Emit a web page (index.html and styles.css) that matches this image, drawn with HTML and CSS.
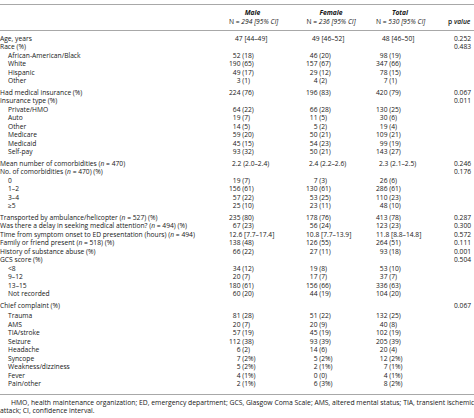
FILE: index.html
```html
<!DOCTYPE html>
<html>
<head>
<meta charset="utf-8">
<link rel="stylesheet" href="styles.css">
</head>
<body>
<div class="sheet">
  <div class="head">
    <div class="hrow">
      <div></div>
      <div class="hc m"><i class="hb">Male</i></div>
      <div class="hc f"><i class="hb">Female</i></div>
      <div class="hc t"><i class="hb">Total</i></div>
      <div></div>
    </div>
    <div class="hrow">
      <div></div>
      <div class="hc m">N = <i>294 [95% CI]</i></div>
      <div class="hc f">N = <i>236 [95% CI]</i></div>
      <div class="hc t">N = <i>530 [95% CI]</i></div>
      <div class="pc">p <i>value</i></div>
    </div>
  </div>

  <div class="body">
    <div class="group">
      <div class="row"><div>Age, years</div><div class="c ci">47 [44–49]</div><div class="c ci">49 [46–52]</div><div class="c ci">48 [46–50]</div><div class="p">0.252</div></div>
      <div class="row"><div>Race (%)</div><div></div><div></div><div></div><div class="p">0.483</div></div>
      <div class="row"><div class="sub">African-American/Black</div><div class="c"><span class="n">52</span> (18)</div><div class="c"><span class="n">46</span> (20)</div><div class="c"><span class="n">98</span> (19)</div><div></div></div>
      <div class="row"><div class="sub">White</div><div class="c"><span class="n">190</span> (65)</div><div class="c"><span class="n">157</span> (67)</div><div class="c"><span class="n">347</span> (66)</div><div></div></div>
      <div class="row"><div class="sub">Hispanic</div><div class="c"><span class="n">49</span> (17)</div><div class="c"><span class="n">29</span> (12)</div><div class="c"><span class="n">78</span> (15)</div><div></div></div>
      <div class="row"><div class="sub">Other</div><div class="c"><span class="n">3</span> (1)</div><div class="c"><span class="n">4</span> (2)</div><div class="c"><span class="n">7</span> (1)</div><div></div></div>
    </div>

    <div class="group">
      <div class="row"><div>Had medical insurance (%)</div><div class="c"><span class="n">224</span> (76)</div><div class="c"><span class="n">196</span> (83)</div><div class="c"><span class="n">420</span> (79)</div><div class="p">0.067</div></div>
      <div class="row"><div>Insurance type (%)</div><div></div><div></div><div></div><div class="p">0.011</div></div>
      <div class="row"><div class="sub">Private/HMO</div><div class="c"><span class="n">64</span> (22)</div><div class="c"><span class="n">66</span> (28)</div><div class="c"><span class="n">130</span> (25)</div><div></div></div>
      <div class="row"><div class="sub">Auto</div><div class="c"><span class="n">19</span> (7)</div><div class="c"><span class="n">11</span> (5)</div><div class="c"><span class="n">30</span> (6)</div><div></div></div>
      <div class="row"><div class="sub">Other</div><div class="c"><span class="n">14</span> (5)</div><div class="c"><span class="n">5</span> (2)</div><div class="c"><span class="n">19</span> (4)</div><div></div></div>
      <div class="row"><div class="sub">Medicare</div><div class="c"><span class="n">59</span> (20)</div><div class="c"><span class="n">50</span> (21)</div><div class="c"><span class="n">109</span> (21)</div><div></div></div>
      <div class="row"><div class="sub">Medicaid</div><div class="c"><span class="n">45</span> (15)</div><div class="c"><span class="n">54</span> (23)</div><div class="c"><span class="n">99</span> (19)</div><div></div></div>
      <div class="row"><div class="sub">Self-pay</div><div class="c"><span class="n">93</span> (32)</div><div class="c"><span class="n">50</span> (21)</div><div class="c"><span class="n">143</span> (27)</div><div></div></div>
    </div>

    <div class="group">
      <div class="row"><div>Mean number of comorbidities (<i>n</i> = 470)</div><div class="c mean">2.2 (2.0–2.4)</div><div class="c mean">2.4 (2.2–2.6)</div><div class="c mean">2.3 (2.1–2.5)</div><div class="p">0.246</div></div>
      <div class="row"><div>No. of comorbidities (<i>n</i> = 470) (%)</div><div></div><div></div><div></div><div class="p">0.176</div></div>
      <div class="row"><div class="sub">0</div><div class="c"><span class="n">19</span> (7)</div><div class="c"><span class="n">7</span> (3)</div><div class="c"><span class="n">26</span> (6)</div><div></div></div>
      <div class="row"><div class="sub">1–2</div><div class="c"><span class="n">156</span> (61)</div><div class="c"><span class="n">130</span> (61)</div><div class="c"><span class="n">286</span> (61)</div><div></div></div>
      <div class="row"><div class="sub">3–4</div><div class="c"><span class="n">57</span> (22)</div><div class="c"><span class="n">53</span> (25)</div><div class="c"><span class="n">110</span> (23)</div><div></div></div>
      <div class="row"><div class="sub">≥5</div><div class="c"><span class="n">25</span> (10)</div><div class="c"><span class="n">23</span> (11)</div><div class="c"><span class="n">48</span> (10)</div><div></div></div>
    </div>

    <div class="group">
      <div class="row"><div>Transported by ambulance/helicopter (<i>n</i> = 527) (%)</div><div class="c"><span class="n">235</span> (80)</div><div class="c"><span class="n">178</span> (76)</div><div class="c"><span class="n">413</span> (78)</div><div class="p">0.287</div></div>
      <div class="row"><div>Was there a delay in seeking medical attention? (<i>n</i> = 494) (%)</div><div class="c"><span class="n">67</span> (23)</div><div class="c"><span class="n">56</span> (24)</div><div class="c"><span class="n">123</span> (23)</div><div class="p">0.300</div></div>
      <div class="row"><div>Time from symptom onset to ED presentation (hours) (<i>n</i> = 494)</div><div class="c">12.6 [7.7–17.4]</div><div class="c">10.8 [7.7–13.9]</div><div class="c">11.8 [8.8–14.8]</div><div class="p">0.572</div></div>
      <div class="row"><div>Family or friend present (<i>n</i> = 518) (%)</div><div class="c"><span class="n">138</span> (48)</div><div class="c"><span class="n">126</span> (55)</div><div class="c"><span class="n">264</span> (51)</div><div class="p">0.111</div></div>
      <div class="row"><div>History of substance abuse (%)</div><div class="c"><span class="n">66</span> (22)</div><div class="c"><span class="n">27</span> (11)</div><div class="c"><span class="n">93</span> (18)</div><div class="p">0.001</div></div>
      <div class="row"><div>GCS score (%)</div><div></div><div></div><div></div><div class="p">0.504</div></div>
      <div class="row"><div class="sub">&lt;8</div><div class="c"><span class="n">34</span> (12)</div><div class="c"><span class="n">19</span> (8)</div><div class="c"><span class="n">53</span> (10)</div><div></div></div>
      <div class="row"><div class="sub">9–12</div><div class="c"><span class="n">20</span> (7)</div><div class="c"><span class="n">17</span> (7)</div><div class="c"><span class="n">37</span> (7)</div><div></div></div>
      <div class="row"><div class="sub">13–15</div><div class="c"><span class="n">180</span> (61)</div><div class="c"><span class="n">156</span> (66)</div><div class="c"><span class="n">336</span> (63)</div><div></div></div>
      <div class="row"><div class="sub">Not recorded</div><div class="c"><span class="n">60</span> (20)</div><div class="c"><span class="n">44</span> (19)</div><div class="c"><span class="n">104</span> (20)</div><div></div></div>
    </div>

    <div class="group">
      <div class="row tall"><div>Chief complaint (%)</div><div></div><div></div><div></div><div class="p">0.067</div></div>
      <div class="row"><div class="sub">Trauma</div><div class="c"><span class="n">81</span> (28)</div><div class="c"><span class="n">51</span> (22)</div><div class="c"><span class="n">132</span> (25)</div><div></div></div>
      <div class="row"><div class="sub">AMS</div><div class="c"><span class="n">20</span> (7)</div><div class="c"><span class="n">20</span> (9)</div><div class="c"><span class="n">40</span> (8)</div><div></div></div>
      <div class="row"><div class="sub">TIA/stroke</div><div class="c"><span class="n">57</span> (19)</div><div class="c"><span class="n">45</span> (19)</div><div class="c"><span class="n">102</span> (19)</div><div></div></div>
      <div class="row"><div class="sub">Seizure</div><div class="c"><span class="n">112</span> (38)</div><div class="c"><span class="n">93</span> (39)</div><div class="c"><span class="n">205</span> (39)</div><div></div></div>
      <div class="row"><div class="sub">Headache</div><div class="c"><span class="n">6</span> (2)</div><div class="c"><span class="n">14</span> (6)</div><div class="c"><span class="n">20</span> (4)</div><div></div></div>
      <div class="row"><div class="sub">Syncope</div><div class="c"><span class="n">7</span> (2%)</div><div class="c"><span class="n">5</span> (2%)</div><div class="c"><span class="n">12</span> (2%)</div><div></div></div>
      <div class="row"><div class="sub">Weakness/dizziness</div><div class="c"><span class="n">5</span> (2%)</div><div class="c"><span class="n">2</span> (1%)</div><div class="c"><span class="n">7</span> (1%)</div><div></div></div>
      <div class="row"><div class="sub">Fever</div><div class="c"><span class="n">4</span> (1%)</div><div class="c"><span class="n">0</span> (0)</div><div class="c"><span class="n">4</span> (1%)</div><div></div></div>
      <div class="row"><div class="sub">Pain/other</div><div class="c"><span class="n">2</span> (1%)</div><div class="c"><span class="n">6</span> (3%)</div><div class="c"><span class="n">8</span> (2%)</div><div></div></div>
    </div>
  </div>

  <p class="note">HMO, health maintenance organization; ED, emergency department; GCS, Glasgow Coma Scale; AMS, altered mental status; TIA, transient ischemic<br>attack; CI, confidence interval.</p>
</div>
</body>
</html>
```

FILE: styles.css
```css
html, body {
  margin: 0;
  padding: 0;
  background: #fff;
}

body {
  font-family: "Open Sans", "Liberation Sans", sans-serif;
  font-size: 6.7px;
  color: #161616;
  overflow: hidden;
}

.sheet {
  width: 474px;
  padding-top: 4px;
}

.head {
  border-top: 1.5px solid #a8a8a8;
  border-bottom: 1.5px solid #a8a8a8;
  padding: 2.5px 0 3.5px;
}

.hrow,
.row {
  display: grid;
  grid-template-columns: 229px 77px 70px 76px 1fr;
  white-space: nowrap;
}

.hrow {
  height: 9.5px;
  line-height: 9.5px;
}

.hc {
  text-align: center;
}

.hc.m {
  margin-right: 30px;
  margin-left: -30px;
  padding-left: 30px;
}

.hc.f {
  padding-right: 20px;
}

.hc.t {
  padding-right: 28px;
}

.hb {
  font-weight: 700;
}

.pc {
  margin-left: -4px;
  font-weight: 600;
}

.body {
  padding: 3.5px 0 4.5px;
  border-bottom: 1.5px solid #a8a8a8;
}

.group + .group {
  margin-top: 3px;
}

.row {
  height: 8.53px;
  line-height: 8.53px;
}

.row.tall {
  height: 10.4px;
}

.sub {
  padding-left: 8px;
}

.n {
  display: inline-block;
  width: 11.5px;
  text-align: right;
}

.ci {
  padding-left: 6px;
}

.mean {
  padding-left: 3px;
}

.p {
  padding-left: 2px;
}

.note {
  margin: 4.3px 0 0;
  font-size: 6.8px;
  line-height: 8.4px;
  text-indent: 11px;
  white-space: nowrap;
}
```
